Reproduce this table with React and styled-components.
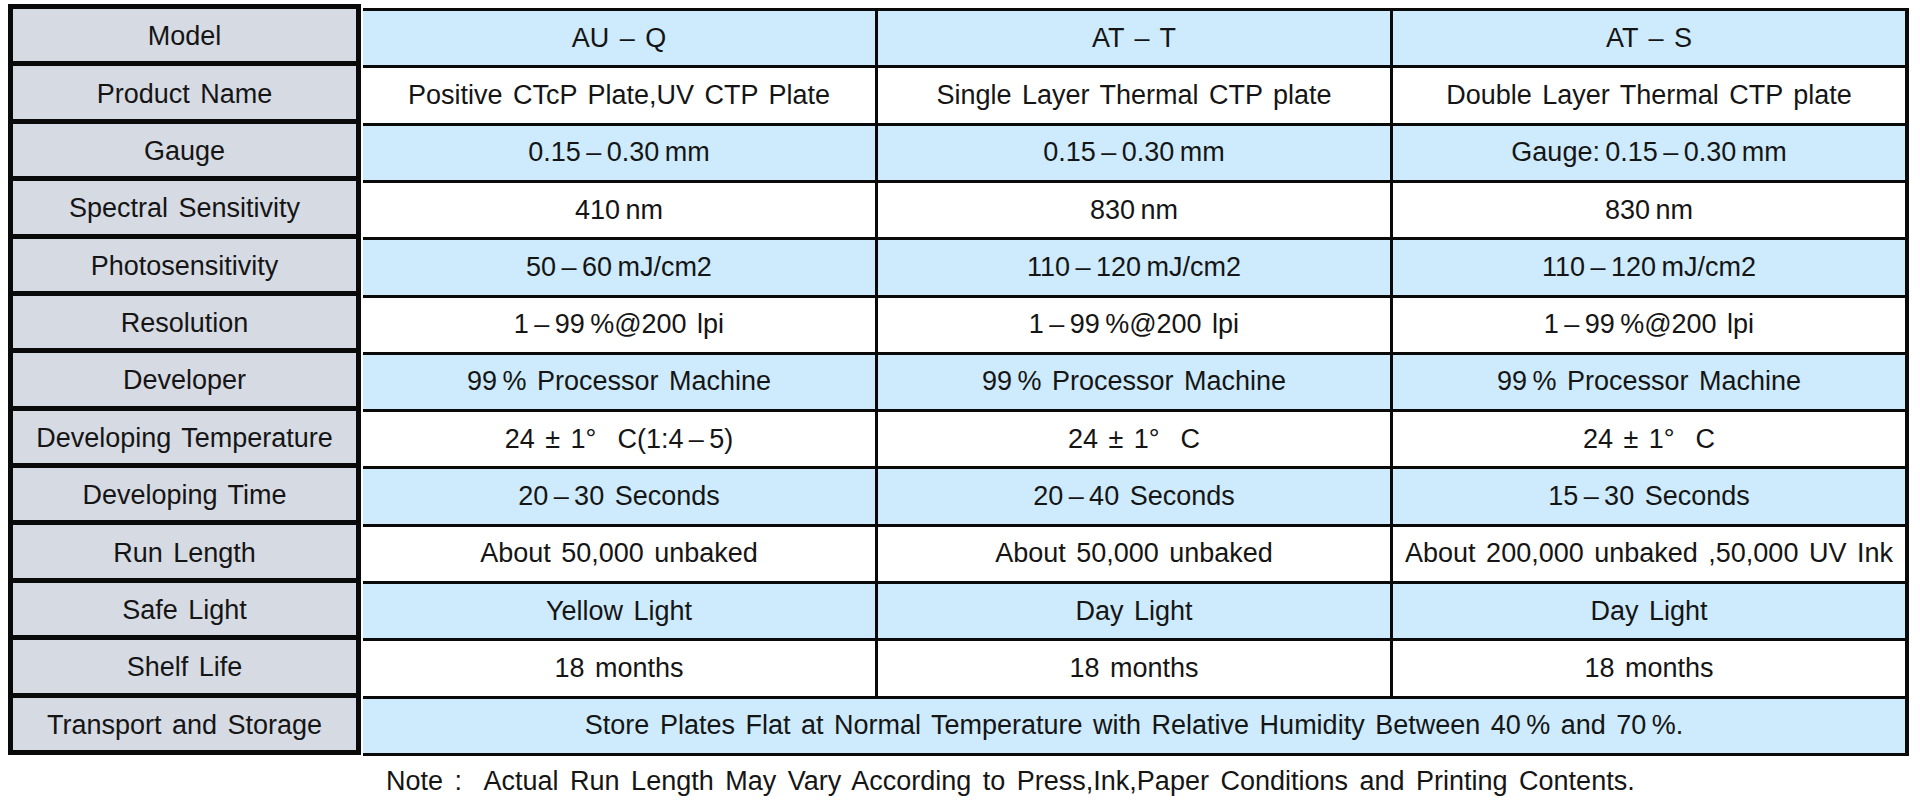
import React from "react";
import styled, { createGlobalStyle } from "styled-components";

const Global = createGlobalStyle`
  html, body { margin: 0; padding: 0; background: #ffffff; }
  body { font-family: "Liberation Sans", Arial, sans-serif; color: #151515; }
`;

const Page = styled.div`
  width: 1920px;
  height: 800px;
  padding: 4px 0 0 8px;
  box-sizing: border-box;
  display: flex;
  flex-direction: column;
`;

const TableWrap = styled.div`
  display: flex;
  align-items: flex-start;
  gap: 2px;
`;

const LeftCol = styled.div`
  width: 353px;
  height: 751px;
  box-sizing: border-box;
  border: 5px solid #0a0a0a;
  background: #0a0a0a;
  display: grid;
  grid-template-rows: repeat(13, 1fr);
  row-gap: 5px;
`;

const HeadCell = styled.div`
  background: #d6dae3;
  display: flex;
  align-items: center;
  justify-content: center;
  padding-top: 3px;
  font-size: 27px;
  word-spacing: 3px;
  white-space: nowrap;
`;

const RightTable = styled.div`
  margin-top: 4px;
  width: 1546px;
  height: 748px;
  box-sizing: border-box;
  border-top: 3px solid #0a0a0a;
  border-bottom: 3px solid #0a0a0a;
  border-right: 4px solid #0a0a0a;
  background: #0a0a0a;
  display: grid;
  grid-template-columns: repeat(3, 1fr);
  grid-template-rows: repeat(13, 1fr);
  gap: 3px;
`;

const Cell = styled.div`
  background: ${(p) => (p.$blue ? "#cdebfc" : "#ffffff")};
  grid-column: ${(p) => (p.$span ? `span ${p.$span}` : "auto")};
  display: flex;
  align-items: center;
  justify-content: center;
  font-size: 27px;
  word-spacing: 3px;
  white-space: pre;
  overflow: hidden;
`;

const Note = styled.div`
  margin: 10px 0 0 378px;
  font-size: 27px;
  word-spacing: 4px;
  white-space: pre;
`;

const t = "\u2009";
const range = (a, b, u = "") => `${a}${t}–${t}${b}${u ? t + u : ""}`;

const rows = [
  ["Model", ["AU – Q", "AT – T", "AT – S"]],
  ["Product Name", ["Positive CTcP Plate,UV CTP Plate", "Single Layer Thermal CTP plate", "Double Layer Thermal CTP plate"]],
  ["Gauge", [range("0.15", "0.30", "mm"), range("0.15", "0.30", "mm"), "Gauge:" + t + range("0.15", "0.30", "mm")]],
  ["Spectral Sensitivity", [`410${t}nm`, `830${t}nm`, `830${t}nm`]],
  ["Photosensitivity", [range("50", "60", "mJ/cm2"), range("110", "120", "mJ/cm2"), range("110", "120", "mJ/cm2")]],
  ["Resolution", [`1${t}–${t}99${t}%@200 lpi`, `1${t}–${t}99${t}%@200 lpi`, `1${t}–${t}99${t}%@200 lpi`]],
  ["Developer", [`99${t}% Processor Machine`, `99${t}% Processor Machine`, `99${t}% Processor Machine`]],
  ["Developing Temperature", [`24 ± 1°  C(1:4${t}–${t}5)`, "24 ± 1°  C", "24 ± 1°  C"]],
  ["Developing Time", [range("20", "30") + " Seconds", range("20", "40") + " Seconds", range("15", "30") + " Seconds"]],
  ["Run Length", ["About 50,000 unbaked", "About 50,000 unbaked", "About 200,000 unbaked ,50,000 UV Ink"]],
  ["Safe Light", ["Yellow Light", "Day Light", "Day Light"]],
  ["Shelf Life", ["18 months", "18 months", "18 months"]],
  ["Transport and Storage", [`Store Plates Flat at Normal Temperature with Relative Humidity Between 40${t}% and 70${t}%.`]],
];

export default function App() {
  return (
    <>
      <Global />
      <Page>
        <TableWrap>
          <LeftCol>
            {rows.map(([label]) => (
              <HeadCell key={label}>{label}</HeadCell>
            ))}
          </LeftCol>
          <RightTable>
            {rows.map(([label, vals], i) =>
              vals.map((v, j) => (
                <Cell
                  key={label + j}
                  $blue={i % 2 === 0}
                  $span={vals.length === 1 ? 3 : undefined}
                >
                  {v}
                </Cell>
              ))
            )}
          </RightTable>
        </TableWrap>
        <Note>
          Note :  Actual Run Length May Vary According to Press,Ink,Paper Conditions and Printing Contents.
        </Note>
      </Page>
    </>
  );
}
